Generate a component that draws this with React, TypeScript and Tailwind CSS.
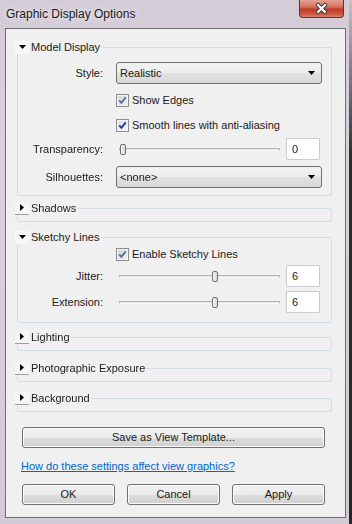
import React from 'react';

function Toggle({ open }: { open: boolean }) {
  return (
    <div
      className={
        open
          ? 'w-[14px] h-[13px] shrink-0 bg-[#f8f8f8] flex items-center justify-center'
          : 'w-[14px] h-[13px] shrink-0 bg-[#f6f6f6] border-b border-[#a0a0a0] flex items-center justify-center'
      }
    >
      {open ? (
        <svg width="7" height="4" viewBox="0 0 7 4">
          <path d="M0 0h7L3.5 4z" fill="#000" />
        </svg>
      ) : (
        <svg width="4" height="7" viewBox="0 0 4 7">
          <path d="M0 0v7L4 3.5z" fill="#000" />
        </svg>
      )}
    </div>
  );
}

function Section({
  title,
  open,
  blur,
  className,
  children,
}: {
  title: string;
  open: boolean;
  blur?: boolean;
  className?: string;
  children?: React.ReactNode;
}) {
  return (
    <div className={`${className ?? ''} ${blur ? 'blur-[0.6px]' : ''}`}>
      <div className="flex h-[14px] items-center">
        <Toggle open={open} />
        <span className="ml-[2px] text-[11px] leading-[14px] text-[#1a1a1a]">{title}</span>
        <div className="ml-[1px] flex-1 self-end h-[7px] border-t border-r border-[#d3dde4] rounded-tr-[3px]" />
      </div>
      {open ? (
        <div className="ml-[2px] border-l border-r border-b border-[#d3dde4] rounded-b-[3px]">{children}</div>
      ) : (
        <div className="ml-[2px] h-[7px] border-l border-r border-b border-[#d3dde4] rounded-b-[3px]" />
      )}
    </div>
  );
}

function Check({ dim, label }: { dim?: boolean; label: string }) {
  return (
    <div className="ml-[98px] flex h-[13px] items-center">
      <svg width="13" height="13" viewBox="0 0 13 13" className="shrink-0">
        <defs>
          <linearGradient id={dim ? 'cbd' : 'cb'} x1="0" y1="0" x2="1" y2="1">
            <stop offset="0" stopColor={dim ? '#d6d6d6' : '#d9dde3'} />
            <stop offset="1" stopColor={dim ? '#f2f2f2' : '#f7f8fa'} />
          </linearGradient>
        </defs>
        <rect x="0.5" y="0.5" width="12" height="12" fill="#f4f4f4" stroke={dim ? '#8c8c8c' : '#8e8f8f'} />
        <rect x="2" y="2" width="9" height="9" fill={`url(#${dim ? 'cbd' : 'cb'})`} />
        <path
          d="M3.2 6.4 L5.4 8.8 L9.8 3.4"
          stroke={dim ? '#5d6f9c' : '#22389a'}
          strokeWidth="1.9"
          fill="none"
        />
      </svg>
      <span className="ml-[3px] text-[11px] leading-[13px] text-[#1a1a1a]">{label}</span>
    </div>
  );
}

function Row({ label, children, className }: { label: string; children: React.ReactNode; className?: string }) {
  return (
    <div className={`flex h-[22px] items-center ${className ?? ''}`}>
      <div className="w-[85px] shrink-0 text-right text-[11px] text-[#1a1a1a]">{label}</div>
      <div className="ml-[13px] flex flex-1 items-center">{children}</div>
    </div>
  );
}

function Combo({ value }: { value: string }) {
  return (
    <div className="flex h-[22px] flex-1 items-center rounded-[3px] border border-[#707070] bg-[linear-gradient(#f3f3f3_0%,#ececec_50%,#e1e1e1_50%,#d9d9d9_100%)] pl-[3px] pr-[6px] text-[11px] text-[#1a1a1a]">
      <span className="flex-1">{value}</span>
      <svg width="7" height="4" viewBox="0 0 7 4">
        <path d="M0 0h7L3.5 4z" fill="#000" />
      </svg>
    </div>
  );
}

function Slider({ pos, value }: { pos: number; value: string }) {
  return (
    <>
      <div className="relative ml-[3px] h-[13px] flex-1">
        <div className="absolute left-0 right-0 top-[5px] h-[3px] rounded-[1px] border border-[#b4b4b4] border-b-[#f8f8f8] bg-[#e6e6e6]" />
        <div
          className="absolute top-[1px] h-[11px] w-[6px] rounded-[2px] border border-[#707070] bg-[linear-gradient(90deg,#f4f4f4,#d8d8d8)]"
          style={{ left: pos }}
        />
      </div>
      <div className="ml-[6px] mr-[2px] flex h-[22px] w-[34px] items-center rounded-[1px] border border-[#c9ccd2] bg-white pl-[5px] text-[11px] text-[#1a1a1a]">
        {value}
      </div>
    </>
  );
}

function Btn({ children, className }: { children: React.ReactNode; className?: string }) {
  return (
    <div
      className={`flex h-[21px] items-center justify-center rounded-[3px] border border-[#707070] bg-[linear-gradient(#f2f2f2_0%,#ebebeb_50%,#dddddd_50%,#cfcfcf_100%)] text-[11px] text-[#1a1a1a] shadow-[inset_0_0_0_1px_#fbfbfb] ${className ?? ''}`}
    >
      {children}
    </div>
  );
}

export default function App() {
  return (
    <div className="flex h-[524px] w-[352px] overflow-hidden font-['Liberation_Sans',Arial,sans-serif] bg-[linear-gradient(180deg,#c9c0cc,#2f2b2e_30%,#2a2628)]">
      <div className="flex w-[349px] flex-col bg-[linear-gradient(180deg,#d3cbd6_0%,#d8d1da_30%,#d2cad4_100%)]">
        {/* title bar */}
        <div className="flex h-[28px] items-start">
          <div className="flex-1 pl-[6px] pt-[7px] text-[12px] leading-[14px] text-[#1a1a1a] [text-shadow:0_0_6px_#ffffff]">
            Graphic Display Options
          </div>
          <div className="mr-[5px] flex h-[18px] w-[45px] items-center justify-center rounded-b-[4px] border border-t-0 border-[#6d3028] bg-[linear-gradient(#e3a293_0%,#d3725f_40%,#c2392a_55%,#cc5a45_85%,#d98a76_100%)]">
            <svg width="17" height="13" viewBox="0 0 17 13">
              <path d="M5 3 L12 10 M12 3 L5 10" stroke="#3d3d3d" strokeWidth="4.2" strokeLinecap="round" />
              <path d="M5 3 L12 10 M12 3 L5 10" stroke="#ffffff" strokeWidth="2.2" strokeLinecap="round" />
            </svg>
          </div>
        </div>

        {/* client area */}
        <div className="ml-[5px] flex h-[490px] w-[341px] flex-col border border-[#6e6e6e] bg-[#f0f0f0]">
          <div className="flex flex-col pl-[9px] pr-[13px] pt-[11px]">
            <Section title="Model Display" open>
              <div className="flex flex-col pb-[7px] pr-[9px] pt-[8px]">
                <Row label="Style:">
                  <Combo value="Realistic" />
                </Row>
                <div className="mt-[10px]">
                  <Check dim label="Show Edges" />
                </div>
                <div className="mt-[12px]">
                  <Check label="Smooth lines with anti-aliasing" />
                </div>
                <Row label="Transparency:" className="mt-[6px] blur-[0.6px]">
                  <Slider pos={1} value="0" />
                </Row>
                <Row label="Silhouettes:" className="mt-[6px] blur-[0.6px]">
                  <Combo value="<none>" />
                </Row>
              </div>
            </Section>

            <Section title="Shadows" open={false} blur className="mt-[5px]" />

            <Section title="Sketchy Lines" open className="mt-[8px]">
              <div className="flex flex-col pb-[9px] pr-[9px] pt-[4px]">
                <Check dim label="Enable Sketchy Lines" />
                <Row label="Jitter:" className="mt-[4px]">
                  <Slider pos={93} value="6" />
                </Row>
                <Row label="Extension:" className="mt-[4px]">
                  <Slider pos={93} value="6" />
                </Row>
              </div>
            </Section>

            <Section title="Lighting" open={false} blur className="mt-[7px]" />
            <Section title="Photographic Exposure" open={false} blur className="mt-[10px]" />
            <Section title="Background" open={false} blur className="mt-[9px]" />
          </div>

          <div className="ml-[16px] flex w-[303px] flex-col">
            <Btn className="mt-[15px]">Save as View Template...</Btn>
            <div className="-ml-[1px] mt-[11px] h-[14px] text-[11px] leading-[14px] text-[#0066cc] underline">
              How do these settings affect view graphics?
            </div>
            <div className="mt-[11px] flex gap-[12px]">
              <Btn className="w-[93px]">OK</Btn>
              <Btn className="w-[93px]">Cancel</Btn>
              <Btn className="w-[93px]">Apply</Btn>
            </div>
          </div>
        </div>
      </div>
      <div className="flex-1" />
    </div>
  );
}
